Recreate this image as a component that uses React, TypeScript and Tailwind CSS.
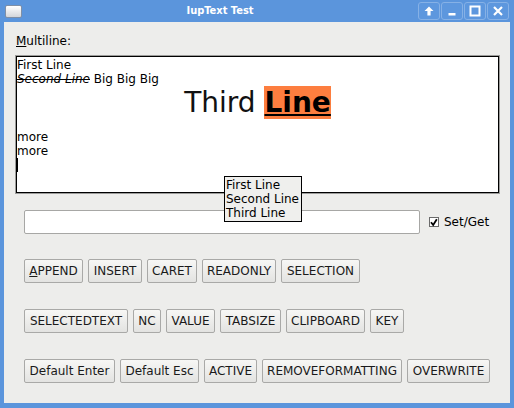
import React from "react";

function Btn({ w, children }: { w: string; children: React.ReactNode }) {
  return (
    <div
      className={`${w} h-[24px] shrink-0 border border-[#a9a9a7] rounded-[2px] bg-linear-to-b from-[#f7f7f5] to-[#e3e3e1] flex items-center justify-center text-[12px] text-[#1a1a1a] whitespace-nowrap`}
    >
      {children}
    </div>
  );
}

function TitleBtn({ children }: { children: React.ReactNode }) {
  return (
    <div className="w-[22px] h-[18px] rounded-[3px] border border-[#86b1e6] bg-[#5d97de] flex items-center justify-center">
      {children}
    </div>
  );
}

export default function App() {
  return (
    <div className="w-[514px] h-[408px] bg-[#5b95dc] flex flex-col overflow-hidden font-['DejaVu_Sans','Liberation_Sans',sans-serif] text-[12px] text-black">
      {/* Title bar */}
      <div className="h-[22px] flex items-center shrink-0">
        <div className="ml-[5px] w-[17px] h-[13px] rounded-[2px] border border-[#7f8fa6] bg-linear-to-b from-white to-[#d4d6da]" />
        <div className="flex-1 text-center text-white font-bold text-[11px] font-['DejaVu_Sans_Condensed','DejaVu_Sans',sans-serif]">
          IupText Test
        </div>
        <div className="flex gap-[1px] pr-[5px]">
          <TitleBtn>
            <svg width="12" height="12" viewBox="0 0 12 12">
              <path d="M6 1.5 L10.5 6 L7.6 6 L7.6 10.5 L4.4 10.5 L4.4 6 L1.5 6 Z" fill="white" />
            </svg>
          </TitleBtn>
          <TitleBtn>
            <svg width="12" height="12" viewBox="0 0 12 12">
              <rect x="2.5" y="8" width="7" height="2.5" fill="white" />
            </svg>
          </TitleBtn>
          <TitleBtn>
            <svg width="12" height="12" viewBox="0 0 12 12">
              <rect x="1.5" y="1.5" width="9" height="9" fill="none" stroke="white" strokeWidth="2" />
            </svg>
          </TitleBtn>
          <TitleBtn>
            <svg width="12" height="12" viewBox="0 0 12 12">
              <path d="M2 2 L10 10 M10 2 L2 10" stroke="white" strokeWidth="2.2" />
            </svg>
          </TitleBtn>
        </div>
      </div>

      {/* Content */}
      <div className="flex-1 mx-[4px] mb-[5px] bg-[#ededeb] relative flex flex-col">
        <div className="pl-[12px] pt-[12px] h-[26px] leading-[14px]">
          <span className="underline">M</span>ultiline:
        </div>

        {/* Multiline text */}
        <div className="ml-[11px] mt-[7px] w-[485px] h-[139px] border border-[#9c9c9a] shrink-0">
          <div className="w-full h-full border border-black bg-white pt-[1px]">
            <div className="h-[14px] leading-[14px]">First Line</div>
            <div className="h-[14px] leading-[14px] whitespace-nowrap">
              <span className="italic line-through">Second Line</span> Big Big Big
            </div>
            <div className="h-[33px] leading-[33px] text-[28px] text-center text-[#111]">
              Third{" "}
              <span className="font-bold underline bg-[#fd7e3f] text-black">Line</span>
            </div>
            <div className="mt-[11px] h-[14px] leading-[14px]">more</div>
            <div className="h-[14px] leading-[14px]">more</div>
            <div className="w-[1px] h-[14px] bg-black" />
          </div>
        </div>

        {/* Input row */}
        <div className="flex items-center mt-[16px] shrink-0">
          <div className="ml-[20px] w-[396px] h-[24px] border border-[#a7a7a5] rounded-[2px] bg-white" />
          <svg className="ml-[9px]" width="10" height="10" viewBox="0 0 10 10">
            <rect x="0.5" y="0.5" width="9" height="9" fill="white" stroke="#6b6b6b" />
            <path d="M2 5.2 L4.2 8 L7.8 2.2" fill="none" stroke="black" strokeWidth="1.8" />
          </svg>
          <span className="ml-[5px]">Set/Get</span>
        </div>

        {/* Button rows */}
        <div className="flex gap-[5px] pl-[20px] mt-[25px] shrink-0">
          <Btn w="w-[59px]">
            <span>
              <span className="underline">A</span>PPEND
            </span>
          </Btn>
          <Btn w="w-[54px]">INSERT</Btn>
          <Btn w="w-[50px]">CARET</Btn>
          <Btn w="w-[74px]">READONLY</Btn>
          <Btn w="w-[79px]">SELECTION</Btn>
        </div>
        <div className="flex gap-[5px] pl-[20px] mt-[26px] shrink-0">
          <Btn w="w-[104px]">SELECTEDTEXT</Btn>
          <Btn w="w-[28px]">NC</Btn>
          <Btn w="w-[49px]">VALUE</Btn>
          <Btn w="w-[61px]">TABSIZE</Btn>
          <Btn w="w-[79px]">CLIPBOARD</Btn>
          <Btn w="w-[34px]">KEY</Btn>
        </div>
        <div className="flex gap-[5px] pl-[20px] mt-[26px] shrink-0">
          <Btn w="w-[91px]">Default Enter</Btn>
          <Btn w="w-[79px]">Default Esc</Btn>
          <Btn w="w-[53px]">ACTIVE</Btn>
          <Btn w="w-[140px]">REMOVEFORMATTING</Btn>
          <Btn w="w-[83px]">OVERWRITE</Btn>
        </div>

        {/* Dropdown popup */}
        <div className="absolute left-[220px] top-[154px] w-[78px] h-[46px] border border-black bg-[#efefed] pl-[1px] pt-[1px] leading-[14px] whitespace-nowrap">
          <div>First Line</div>
          <div>Second Line</div>
          <div>Third Line</div>
        </div>
      </div>
    </div>
  );
}
